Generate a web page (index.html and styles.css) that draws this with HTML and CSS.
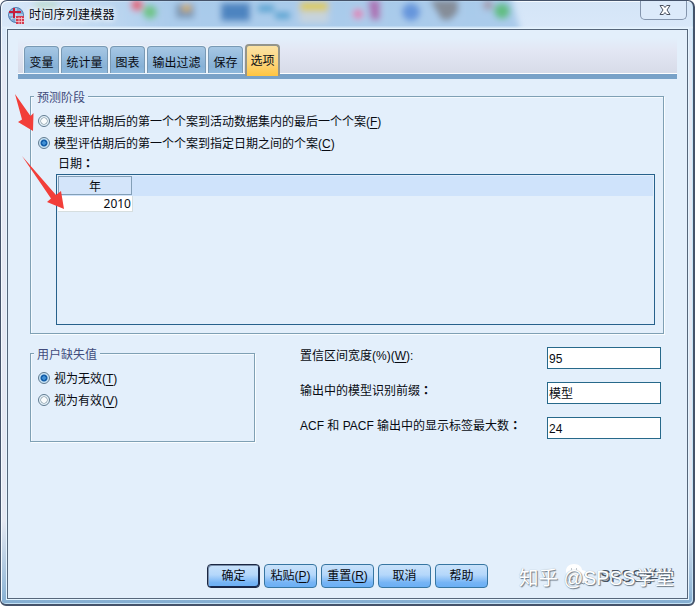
FILE: index.html
```html
<!DOCTYPE html>
<html lang="zh-CN">
<head>
<meta charset="utf-8">
<title>时间序列建模器</title>
<link rel="stylesheet" href="styles.css">
</head>
<body>
<div class="window">
  <header class="titlebar">
    <svg class="glass" width="695" height="29" viewBox="0 0 695 29" aria-hidden="true">
      <defs>
        <filter id="soft" x="-20%" y="-50%" width="140%" height="200%"><feGaussianBlur stdDeviation="3"/></filter>
        <linearGradient id="band"><stop offset="0" stop-color="#8db9e2" stop-opacity="0"/><stop offset=".3" stop-color="#8db9e2"/><stop offset="1" stop-color="#8db9e2"/></linearGradient>
      </defs>
      <g filter="url(#soft)">
        <path d="M20 -8H510L522 36H20Z" fill="url(#band)" opacity=".6"/>
        <path d="M35 3h22v5H35z" fill="#a9d3a0" opacity=".6"/>
        <circle cx="137" cy="5" r="6" fill="#e0697c"/><circle cx="150" cy="12" r="7" fill="#6fc487"/>
        <path d="M176 4h18v14h-18z" fill="#708ba8" opacity=".8"/><path d="M182 5h9v6h-9z" fill="#d7b45b"/>
        <path d="M221 3h29v18h-29z" fill="#4e84c0"/><path d="M258 5h16v7h-16zM275 12h15v7h-15z" fill="#5aa4d2"/>
        <path d="M300 2h28v9h-28z" fill="#dccb58"/><path d="M300 12h28v10h-28z" fill="#c8d4dc"/>
        <circle cx="358" cy="14" r="5" fill="#df82b5"/><path d="M368 0h12v20h-9z" fill="#ad5ca8" opacity=".8"/>
        <circle cx="411" cy="12" r="9" fill="#6695dc"/><path d="M430 0h28v12l-8 8h-8z" fill="#858d98"/>
        <circle cx="488" cy="5" r="5" fill="#a39cae"/><circle cx="502" cy="11" r="8" fill="#62bd82"/>
      </g>
      <path d="M0 26.500h695v2H0z" fill="#e6f1fb" opacity=".6"/>
    </svg>
    <svg class="app-icon" width="17" height="18" viewBox="0 0 17 18" aria-hidden="true">
      <circle cx="8" cy="8" r="7.500" fill="#7fa9d5" stroke="#547fb2"/>
      <path d="M8 1v14M1 8h14M3 4c3 2 7 2 10 0M3 12c3-2 7-2 10 0" fill="none" stroke="#d8e8f6"/>
      <path d="M6 1v10M1 5h12" stroke="#c51d3c" stroke-width="2"/>
      <path d="M8 9h8v8H8z" fill="#d33b50"/><path d="M8 11.500h8M8 14.500h8M11 10v7M13.500 10v7" stroke="#f4cbd2" stroke-width=".8"/>
    </svg>
    <h1>时间序列建模器</h1>
    <button class="close" aria-label="关闭">
      <svg width="14" height="12" viewBox="0 0 14 12"><path d="M2 1.500h3.300L7 3.500l1.700-2H12L9 6l3 4.500H8.700L7 8.500l-1.700 2H2L5 6z" fill="#fff" stroke="#4b5260"/></svg>
    </button>
  </header>
  <main class="client">
    <nav class="tabs">
      <a class="tab w35">变量</a><a class="tab w47">统计量</a><a class="tab w35">图表</a><a class="tab w59">输出过滤</a><a class="tab w35">保存</a><a class="tab selected">选项</a>
    </nav>
    <section class="group forecast">
      <h2>预测阶段</h2>
      <label class="option"><i class="radio"></i><span>模型评估期后的第一个个案到活动数据集内的最后一个个案(<u>F</u>)</span></label>
      <label class="option"><i class="radio on"></i><span>模型评估期后的第一个个案到指定日期之间的个案(<u>C</u>)</span></label>
      <p class="date-label">日期<span class="colon" lang="zh-TW">：</span></p>
      <div class="date-table">
        <div class="thead"><div class="year">年</div></div>
        <div class="value">2010</div>
      </div>
    </section>
    <div class="lower">
      <section class="group missing">
        <h2>用户缺失值</h2>
        <label class="option"><i class="radio on"></i><span>视为无效(<u>T</u>)</span></label>
        <label class="option"><i class="radio"></i><span>视为有效(<u>V</u>)</span></label>
      </section>
      <div class="fields">
        <div class="field"><span>置信区间宽度(%)(<u>W</u>):</span><div class="input">95</div></div>
        <div class="field"><span>输出中的模型识别前缀<span class="colon" lang="zh-TW">：</span></span><div class="input">模型</div></div>
        <div class="field"><span>ACF 和 PACF 输出中的显示标签最大数<span class="colon" lang="zh-TW">：</span></span><div class="input">24</div></div>
      </div>
    </div>
    <footer class="buttons">
      <button class="btn primary">确定</button><button class="btn">粘贴(<u>P</u>)</button><button class="btn">重置(<u>R</u>)</button><button class="btn">取消</button><button class="btn">帮助</button>
    </footer>
  </main>
  <svg class="arrows" width="80" height="140" viewBox="0 0 80 140" aria-hidden="true">
    <path d="M15 0 30.500 22 33.500 19 33 37 18 28 22 25.500Z" fill="#f23e39"/>
    <path d="M22 62 56 101 61 97 64 115 47 108 51 104.500Z" fill="#f23e39"/>
  </svg>
  <div class="watermark">
    <svg width="26" height="26" viewBox="0 0 26 26" aria-hidden="true"><path d="M9 1c5 0 8 3 8 6 5 1 8 4 7 8l-3 5-8-1-4-5C4 15 1 12 1 8s3-7 8-7z" fill="#fff"/><path d="M6 6h1M11 6h1M14 12h1M19 12h1M5 14l-2 4 5-2M13 19l6 2 4-3" fill="none" stroke="#83909c"/></svg>
    <span class="account">SPSS学堂</span>
    <span class="source">知乎 @SPSS学堂</span>
  </div>
</div>
</body>
</html>
```

FILE: styles.css
```css
* { box-sizing: border-box; }
body { margin: 0; font: 12px/16px "Liberation Sans", "Noto Sans CJK SC", sans-serif; color: #080b12; }
h1, h2, p { margin: 0; font-size: 12px; font-weight: 400; }
button { font: inherit; color: inherit; padding: 0; }
u { text-underline-offset: 2px; }
.colon { font-family: "Noto Sans CJK TC", sans-serif; font-weight: 700; line-height: 1; }

.window {
  position: relative; width: 695px; height: 606px; overflow: hidden;
  border: 1px solid #45536a; border-width: 1px 2px 2px 1px; border-radius: 7px 7px 6px 6px;
  background: linear-gradient(#d4e5f7 0, #d9e8f9 28px, #e5e9f4 70px, #e5e8f2 520px, #95b9d8 590px, #83add1);
  box-shadow: inset 1px 1px #f4faff, inset -1px -1px #c4e1f4;
}
.titlebar { position: relative; height: 28px; display: flex; padding-left: 7px; }
.glass { position: absolute; left: -1px; top: -1px; }
.app-icon { position: relative; margin-top: 6px; }
.titlebar h1 { position: relative; margin: 6px 0 0 4px; letter-spacing: .25px; text-shadow: 0 0 5px #fff, 0 0 7px #fff; }
.close {
  position: relative; width: 47px; height: 19px; margin: 0 6px 0 auto;
  display: flex; align-items: center; justify-content: center;
  border: 1px solid #8495ad; border-top: 0; border-radius: 0 0 5px 5px; background: #dceafa;
}
.close svg { margin-left: 2px; }

.client {
  position: relative; margin-left: 6px; width: 681px; height: 570px; border: 1px solid #56667a;
  background: #e3effb; box-shadow: 0 0 0 1px #e5f4ff;
  display: flex; flex-direction: column; padding: 0 10px;
}
.tabs {
  height: 49px; flex: none; display: flex; align-items: flex-end; gap: 2px; padding-left: 6px;
  border-bottom: 5px solid #79a2c8; box-shadow: inset 0 -1px #fff;
  background: linear-gradient(#e3effb 8px, #e3e7f4 20px, #d7dbe8);
}
.tab {
  height: 27px; margin-bottom: 1px; padding-top: 8px; text-align: center;
  border: 1px solid #7999b4; border-bottom: 0; border-radius: 4px 4px 0 0;
  background: linear-gradient(#a6c7e4, #87b1d6 75%, #8fb9dc); box-shadow: 0 0 0 1px #edf5fc;
}
.w35 { width: 35px; }
.w47 { width: 47px; }
.w59 { width: 59px; }
.tab.selected {
  position: relative; width: 35px; height: 32px; margin-bottom: -2px;
  border: 2px solid #94958b; border-bottom: 0; padding-top: 7px;
  background: linear-gradient(#fbe2a4, #fdd478 60%, #ffc540); box-shadow: none;
}

.group { position: relative; border: 1px solid #7fa0b4; box-shadow: 1px 1px #f9fdff, inset 1px 1px #f4faff; }
.group h2 {
  position: absolute; left: 3px; top: -7px; padding: 0 3px; line-height: 16px;
  color: #414b7c; background: #e3effb;
}
.forecast { margin: 17px 0 0 12px; width: 634px; height: 238px; padding: 15px 0 0 7px; }
.option { display: flex; align-items: center; height: 18px; margin-bottom: 4px; gap: 4px; white-space: nowrap; }
.option span { padding-top: 1px; }
.radio {
  width: 12px; height: 12px; flex: none; border-radius: 50%; border: 1px solid #607b90;
  background: radial-gradient(circle, #f9fcfd 0 2.5px, #afbdc6 3px 3.5px, #e5f2fa 4px);
}
.radio.on { background: radial-gradient(circle, #4191d6 0 1.5px, #145ea9 2px 3px, #c9e4f6 4px); }
.date-label { margin: 0 0 0 20px; height: 18px; }
.date-table { margin: 0 0 0 18px; width: 599px; height: 151px; border: 1px solid #27618b; padding: 1px; }
.thead { height: 20px; background: #cfe3fb; }
.year { width: 74px; height: 19px; line-height: 20px; text-align: center; background: #d4e5fa; border: 1px solid #839fb7; }
.value {
  width: 75px; height: 16px; line-height: 15px; padding-right: 1px; text-align: right; background: #fff;
  border: 1px solid #d6dedf; border-top: 0; border-left: 0; font-family: "Noto Sans", sans-serif;
}
.lower { display: flex; margin: 13px 0 0 12px; }
.missing { width: 225px; height: 89px; margin-top: 6px; padding: 15px 0 0 7px; }
.fields { margin-left: 45px; width: 361px; display: flex; flex-direction: column; gap: 13px; }
.field { display: flex; justify-content: space-between; height: 22px; line-height: 18px; white-space: nowrap; }
.input { width: 114px; height: 22px; line-height: 22px; padding-left: 1px; background: #fff; border: 1px solid #27698a; }

.buttons { position: absolute; left: 199px; top: 534px; display: flex; gap: 4px; }
.btn {
  width: 53px; height: 24px; line-height: 23px; border: 1px solid #3776a2; border-radius: 4px;
  background: linear-gradient(#c9e2fa, #b4d7fb 45%, #75b4f5 80%, #6baff4);
}
.btn.primary { border: 1px solid #1b2742; box-shadow: inset -1px -1px #172950, inset 1px 1px #788da9; }
.arrows { position: absolute; left: -1px; top: 93px; }

.watermark { position: absolute; left: 518px; top: 562px; width: 170px; height: 30px; white-space: nowrap; }
.watermark svg { position: absolute; left: 46px; top: 0; }
.watermark span { position: absolute; line-height: 28px; }
.source { left: 0; top: 1px; font-size: 19.5px; color: #fff; text-shadow: 1px 1px 1px #6b7884, 0 0 1px #91a0ad; }
.account { left: 81px; top: 0; font-size: 16px; color: #46515e; }
```
